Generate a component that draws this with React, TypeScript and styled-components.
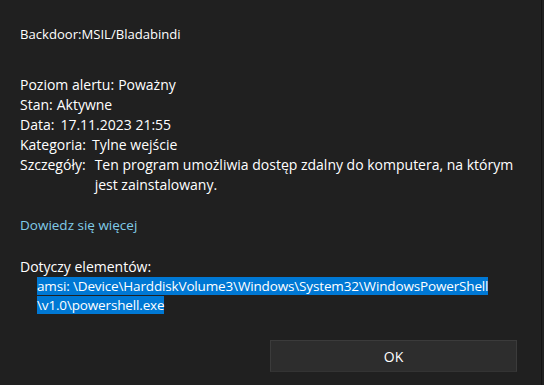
import React from 'react'
import styled, { createGlobalStyle } from 'styled-components'

const GlobalStyle = createGlobalStyle`
  html, body {
    margin: 0;
    padding: 0;
    background: #202020;
  }
  body {
    font-family: "Segoe UI", "Open Sans", "Noto Sans", sans-serif;
    color: #ffffff;
  }
`

const Dialog = styled.div`
  width: 542px;
  height: 385px;
  border-right: 1px solid #141414;
  box-sizing: border-box;
  display: flex;
  flex-direction: column;
  padding: 24px 0 0 20px;
`

const Title = styled.div`
  font-size: 13.1px;
  line-height: 20px;
`

const Details = styled.div`
  margin-top: 31px;
  font-size: 14px;
  line-height: 20px;
`

const Row = styled.div`
  display: flex;
  white-space: nowrap;
`

const Label = styled.span<{ $gap?: number }>`
  margin-right: ${p => p.$gap ?? 4}px;
`

const Value = styled.span``

const Link = styled.a`
  display: block;
  margin-top: 20px;
  font-size: 13.5px;
  line-height: 20px;
  color: #80cbe8;
  text-decoration: none;
  cursor: pointer;
`

const Section = styled.div`
  margin-top: 22px;
  font-size: 14px;
  line-height: 20px;
`

const Items = styled.div`
  margin-left: 17px;
  font-size: 13.5px;
  letter-spacing: -0.15px;
  line-height: 19px;
  white-space: nowrap;
`

const Selected = styled.span`
  background: #0078d4;
  color: #ffffff;
`

const Footer = styled.div`
  margin-top: auto;
  display: flex;
  justify-content: flex-end;
  padding: 0 24px 13px 0;
`

const Button = styled.button`
  width: 247px;
  height: 32px;
  background: #2d2d2d;
  border: 1px solid #3b3b3b;
  border-bottom-color: #333333;
  border-radius: 0;
  color: #ffffff;
  font-family: inherit;
  font-size: 14px;
  padding: 0;
`

export default function App() {
  return (
    <>
      <GlobalStyle />
      <Dialog>
        <Title>Backdoor:MSIL/Bladabindi</Title>
        <Details>
          <Row><Label>Poziom alertu:</Label><Value>Poważny</Value></Row>
          <Row><Label>Stan:</Label><Value>Aktywne</Value></Row>
          <Row><Label $gap={6}>Data:</Label><Value>17.11.2023 21:55</Value></Row>
          <Row><Label $gap={6}>Kategoria:</Label><Value>Tylne wejście</Value></Row>
          <Row>
            <Label $gap={9}>Szczegóły:</Label>
            <Value>
              Ten program umożliwia dostęp zdalny do komputera, na którym
              <br />
              jest zainstalowany.
            </Value>
          </Row>
        </Details>
        <Link>Dowiedz się więcej</Link>
        <Section>Dotyczy elementów:</Section>
        <Items>
          <Selected>amsi: \Device\HarddiskVolume3\Windows\System32\WindowsPowerShell</Selected>
          <br />
          <Selected>\v1.0\powershell.exe</Selected>
        </Items>
        <Footer>
          <Button>OK</Button>
        </Footer>
      </Dialog>
    </>
  )
}
